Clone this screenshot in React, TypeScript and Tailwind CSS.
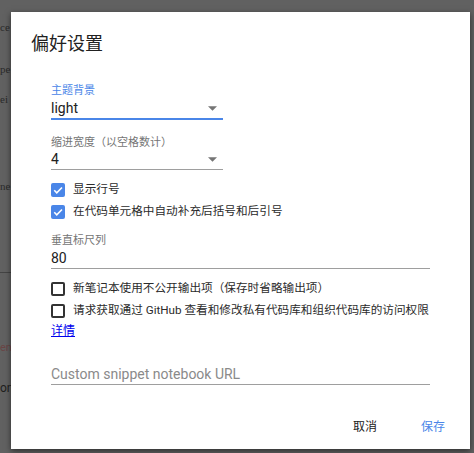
import React from "react";

const font = { fontFamily: 'Roboto, "Noto Sans CJK SC", sans-serif' };

function Checkbox({ checked, label }: { checked: boolean; label: string }) {
  return (
    <div className="flex items-center h-[22px]">
      {checked ? (
        <span className="w-[14px] h-[14px] rounded-[2px] bg-[#4a86e8] flex items-center justify-center shrink-0">
          <svg width="12" height="12" viewBox="0 0 24 24" fill="none">
            <path d="M4.5 12.5l5 5L20 7" stroke="white" strokeWidth="3.2" />
          </svg>
        </span>
      ) : (
        <span className="w-[14px] h-[14px] rounded-[2px] border-2 border-[#333] shrink-0" />
      )}
      <span className="ml-[8px] text-[11.65px] text-[#2b2b2b] whitespace-nowrap">{label}</span>
    </div>
  );
}

function Caret() {
  return (
    <svg width="9" height="5" viewBox="0 0 10 5" className="mr-[6px]">
      <path d="M0 0h10L5 5z" fill="#757575" />
    </svg>
  );
}

export default function App() {
  const serif = { fontFamily: '"Liberation Serif", serif' };

  return (
    <div className="relative w-[474px] h-[453px] overflow-hidden bg-[#616161]" style={font}>
      {/* page behind the modal */}
      <div className="flex flex-col w-[11px] text-[11px] leading-[16px] text-[#2a2a2a]">
        <div className="mt-[19px]" style={serif}>ce</div>
        <div className="mt-[26px]" style={serif}>pe</div>
        <div className="mt-[14px]" style={serif}>ei</div>
        <div className="mt-[71px]" style={serif}>ne</div>
        <div className="mt-[78px] h-px w-full bg-[#444]" />
        <div className="mt-[67px] text-[#6a4545]">en</div>
        <div className="mt-[24px] text-[12px] text-[#1e1e1e]">on</div>
      </div>

      {/* modal */}
      <div className="absolute left-[11px] top-[12px] w-[459px] h-[437px] bg-white flex flex-col shadow-[0_2px_6px_rgba(0,0,0,0.55)]">
        <div className="pl-[20px] pt-[20px] text-[18px] leading-[24px] text-[#212121]">偏好设置</div>

        <div className="pl-[40px] flex flex-col">
          <div className="mt-[28px] w-[172px]">
            <div className="text-[11px] leading-[14px] text-[#4a86e8]">主题背景</div>
            <div className="h-[22px] border-b-2 border-[#4a86e8] flex items-center justify-between">
              <span className="text-[14px] leading-[20px] text-[#212121]">light</span>
              <Caret />
            </div>
          </div>

          <div className="mt-[16px] w-[172px]">
            <div className="text-[11px] leading-[14px] text-[#757575]">缩进宽度（以空格数计）</div>
            <div className="h-[20px] border-b border-[#9e9e9e] flex items-center justify-between">
              <span className="text-[14px] leading-[19px] text-[#212121]">4</span>
              <Caret />
            </div>
          </div>

          <div className="mt-[9px]">
            <Checkbox checked label="显示行号" />
            <Checkbox checked label="在代码单元格中自动补充后括号和后引号" />
          </div>

          <div className="mt-[11px] w-[379px]">
            <div className="text-[11px] leading-[14px] text-[#757575]">垂直标尺列</div>
            <div className="h-[21px] border-b border-[#9e9e9e] flex items-center">
              <span className="text-[14px] leading-[20px] text-[#212121]">80</span>
            </div>
          </div>

          <div className="mt-[9px]">
            <Checkbox checked={false} label="新笔记本使用不公开输出项（保存时省略输出项）" />
            <Checkbox checked={false} label="请求获取通过 GitHub 查看和修改私有代码库和组织代码库的访问权限" />
          </div>

          <a href="#" className="mt-[1px] self-start text-[12px] leading-[16px] text-[#0000ee] underline">
            详情
          </a>

          <div className="mt-[25px] w-[379px] h-[21px] border-b border-[#9e9e9e] flex items-center">
            <span className="text-[14px] leading-[20px] text-[#8a8a8a]">Custom snippet notebook URL</span>
          </div>
        </div>

        <div className="mt-auto pb-[4px] pr-[17px] flex justify-end gap-[28px]">
          <button className="h-[36px] px-[8px] text-[12px] text-[#212121]">取消</button>
          <button className="h-[36px] px-[8px] text-[12px] text-[#4a86e8]">保存</button>
        </div>
      </div>
    </div>
  );
}
